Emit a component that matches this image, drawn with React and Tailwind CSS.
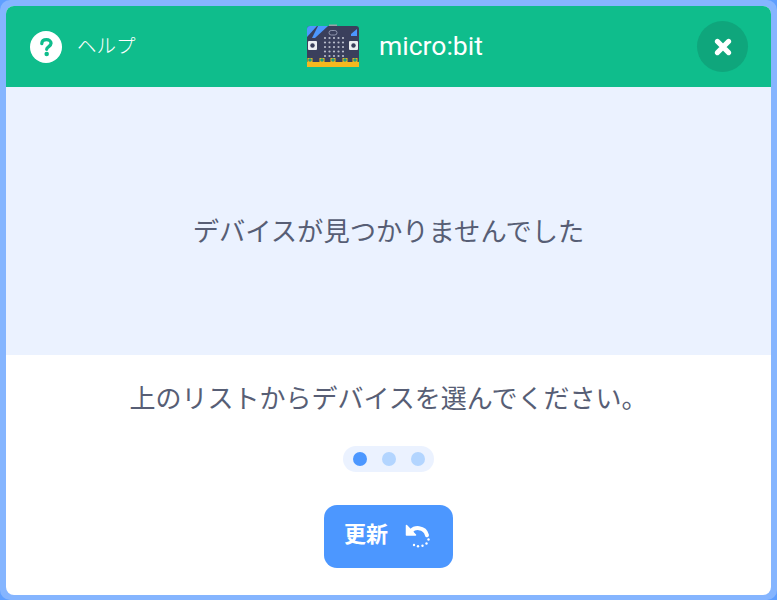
import React from 'react';

const JP = "font-['Noto_Sans_CJK_JP','Noto_Sans',sans-serif]";

const HelpIcon = () => (
  <div className="w-[32px] h-[32px] rounded-full bg-white flex items-center justify-center">
    <svg width="15" height="20" viewBox="0 0 16 22" fill="none">
      <path d="M2.800 7.200C3 4.400 5.200 3 8 3c2.900 0 5 1.600 5 4 0 3.600-4.800 3.400-4.800 6.600" stroke="#0fbd8c" strokeWidth="3.600" strokeLinecap="round" />
      <circle cx="8.200" cy="18.600" r="2.500" fill="#0fbd8c" />
    </svg>
  </div>
);

const MicrobitLogo = () => (
  <svg width="54" height="44" viewBox="0 0 54 44">
    <rect x="23" y="0.500" width="8" height="2" fill="#9aa0a8" />
    <rect x="1" y="2" width="52" height="37" rx="3" fill="#3a3f5c" />
    <path d="M1 5a3 3 0 0 1 3-3h7L1 13z" fill="#4c97ff" />
    <path d="M12 2h10L9 14H6z" fill="#4c97ff" />
    <rect x="23" y="6.500" width="8" height="4.500" rx="2.200" fill="none" stroke="#8f95ad" strokeWidth="1" />
    {[0, 1, 2, 3, 4].map((r) =>
      [0, 1, 2, 3, 4].map((c) => (
        <circle key={`${r}-${c}`} cx={19 + c * 4.500} cy={14 + r * 4.500} r="1.100" fill="#b9bdcc" />
      ))
    )}
    <rect x="2" y="17" width="9" height="9" rx="1" fill="#eceef2" />
    <circle cx="6.500" cy="21.500" r="2.200" fill="#3a3f5c" />
    <rect x="43" y="17" width="9" height="9" rx="1" fill="#eceef2" />
    <circle cx="47.500" cy="21.500" r="2.200" fill="#3a3f5c" />
    <path d="M45 10l6-5v7h-6z" fill="#4c97ff" />
    <rect x="1" y="38" width="52" height="5" fill="#f5b81f" />
    {[4, 16, 27, 39, 49].map((x) => (
      <g key={x}>
        <rect x={x - 2.500} y="34" width="5" height="7" fill="#f5b81f" />
        <circle cx={x} cy="36" r="1.800" fill="#1e9c7c" />
      </g>
    ))}
  </svg>
);

const CloseButton = () => (
  <div className="w-[51px] h-[51px] rounded-full bg-[#0fa67c] flex items-center justify-center">
    <svg width="18" height="18" viewBox="0 0 16 16">
      <path d="M3 3l10 10M13 3L3 13" stroke="#fff" strokeWidth="4.400" strokeLinecap="round" />
    </svg>
  </div>
);

const RefreshIcon = () => (
  <svg width="26" height="26" viewBox="0 0 26 26" fill="none" className="-translate-y-[1px]">
    <path d="M1.500 2.500v9.500h9z" fill="#fff" stroke="#fff" strokeWidth="1.500" strokeLinejoin="round" />
    <path d="M6 8c2.600-2.600 5-3.200 8-2.800 4 0.500 7 2.900 8 7" stroke="#fff" strokeWidth="4" strokeLinecap="round" />
    {[[23.500, 16.500], [21.500, 20.500], [17.500, 22.800], [13, 23.300], [9, 22]].map(([x, y]) => (
      <circle key={x} cx={x} cy={y} r="1.200" fill="#fff" />
    ))}
  </svg>
);

const App = () => {
  return (
    <div className={`w-[777px] h-[600px] bg-[#5f9fff] ${JP}`}>
      <div className="w-full h-full rounded-[10px] bg-[#85b5ff] p-[6px_6px_5px_6px]">
        <div className="w-full h-full rounded-[8px] overflow-hidden bg-white flex flex-col">
          <div className="h-[81px] shrink-0 bg-[#0fbd8c] flex items-center justify-between pl-[24px] pr-[23px] relative text-white">
            <div className="flex items-center gap-[15px]">
              <HelpIcon />
              <span className="text-[19.500px] leading-[28px] font-light -translate-y-[2px]">ヘルプ</span>
            </div>
            <div className="absolute left-[300px] top-[18px] flex items-center gap-[19px]">
              <MicrobitLogo />
              <span className="text-[26.500px] leading-[32px] font-['Roboto','Noto_Sans',sans-serif]">micro:bit</span>
            </div>
            <CloseButton />
          </div>
          <div className="h-[268px] shrink-0 bg-[#ebf2ff] flex items-center justify-center pt-[18px]">
            <p className="text-[26.300px] leading-[32px] text-[#575e75]">デバイスが見つかりませんでした</p>
          </div>
          <div className="flex-1 flex flex-col items-center pt-[24px]">
            <p className="text-[26px] leading-[36px] text-[#575e75]">上のリストからデバイスを選んでください。</p>
            <div className="mt-[31px] h-[26px] w-[91px] rounded-full bg-[#ebf2ff] flex items-center justify-center gap-[15px]">
              <span className="w-[14px] h-[14px] rounded-full bg-[#4c97ff]" />
              <span className="w-[14px] h-[14px] rounded-full bg-[#b3d5ff]" />
              <span className="w-[14px] h-[14px] rounded-full bg-[#b3d5ff]" />
            </div>
            <button className="mt-[33px] w-[129px] h-[63px] rounded-[13px] bg-[#4c97ff] text-white flex items-center justify-center gap-[17px] pr-[2px]">
              <span className="text-[22px] leading-[28px] font-bold -translate-y-[5px]">更新</span>
              <RefreshIcon />
            </button>
          </div>
        </div>
      </div>
    </div>
  );
};

export default App;
